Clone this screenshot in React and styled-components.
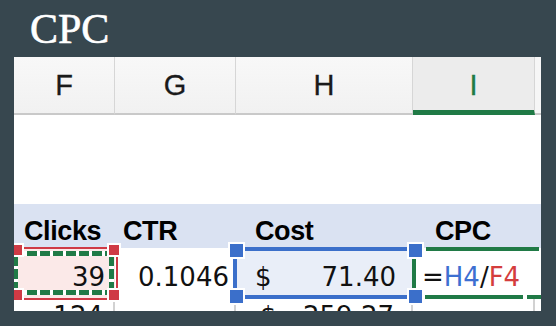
import React from 'react';
import styled, { createGlobalStyle, css } from 'styled-components';

const SLATE = '#37474f';
const GREEN = '#207a46';
const BLUE = '#3b6fca';
const RED = '#cf3a45';

const GlobalStyle = createGlobalStyle`
  html, body {
    margin: 0;
    padding: 0;
    background: ${SLATE};
  }
`;

const Page = styled.div`
  width: 556px;
  height: 326px;
  box-sizing: border-box;
  padding-top: 8px;
  background: ${SLATE};
  overflow: hidden;
`;

const Title = styled.h1`
  margin: 0;
  padding-left: 30px;
  height: 42px;
  font: 400 42px/42px "Liberation Serif", "Times New Roman", serif;
  color: #fff;
  -webkit-text-stroke: 0.6px #fff;
`;

const Sheet = styled.div`
  position: relative;
  margin: 7px 0 0 14px;
  width: 527px;
  height: 254px;
  display: grid;
  grid-template-columns: 101px 121px 177px 122px 6px;
  grid-template-rows: 58px 89px 44px 50px 13px;
  background: #fff;
  overflow: hidden;
  color: #111;
`;

// column letters
const HeaderCell = styled.div`
  box-sizing: border-box;
  display: flex;
  align-items: center;
  justify-content: center;
  background: linear-gradient(#f8f8f8, #f1f1f1);
  border-right: 1px solid #d6d6d6;
  border-bottom: 2px solid #c9c9c9;
  font: 400 29px/30px "Liberation Sans", Arial, sans-serif;
  color: #1a1a1a;
  -webkit-text-stroke: 0.3px currentColor;

  ${p => p.$active && css`
    background: #ececec;
    border-bottom: 5px solid ${GREEN};
    color: ${GREEN};
    padding-top: 3px;
  `}
  ${p => p.$edge && css`
    border-right: none;
    background: #f6f6f6;
  `}
`;

const Blank = styled.div`
  grid-column: 1 / -1;
  background: #fff;
`;

const LabelCell = styled.div`
  box-sizing: border-box;
  padding: 12px 0 0 ${p => p.$pad || 0}px;
  background: #dae2f2;
  font: 700 27px/30px "Liberation Sans", Arial, sans-serif;
  letter-spacing: -0.4px;
  color: #000;
  white-space: nowrap;
`;

const DataCell = styled.div`
  position: relative;
  box-sizing: border-box;
  display: flex;
  justify-content: ${p => p.$justify || 'flex-start'};
  padding: 14px ${p => p.$right || 0}px 0 ${p => p.$left || 0}px;
  background: ${p => p.$bg || '#fff'};
  font: 400 26px/30px "DejaVu Sans", Verdana, sans-serif;
  white-space: nowrap;
`;

const GridCell = styled(DataCell)`
  ::before, ::after {
    content: '';
    position: absolute;
    left: 8px;
    right: 10px;
  }
  ::before {
    top: 2px;
    height: 2px;
    background: #a8c1e6;
  }
  ::after {
    top: 48px;
    height: 2px;
    background: #d3d3d3;
  }
`;

const CutCell = styled.div`
  box-sizing: border-box;
  display: flex;
  justify-content: ${p => p.$justify || 'flex-start'};
  padding: 3px ${p => p.$right || 0}px 0 ${p => p.$left || 0}px;
  border-right: ${p => (p.$edge ? 'none' : '2px solid #d2d2d2')};
  font: 400 26px/30px "DejaVu Sans", Verdana, sans-serif;
  overflow: hidden;
  white-space: nowrap;
`;

// red reference box around F4
const RefBox = styled.div`
  position: absolute;
  top: -1px;
  bottom: -2px;
  left: -2px;
  right: -3px;
  border: 2px solid ${RED};
  z-index: 1;
`;

const dash = dir =>
  `repeating-linear-gradient(${dir}, ${GREEN} 0 10px, #fff 10px 13px)`;

// marching ants of the copy range
const Ants = styled.div`
  position: absolute;
  z-index: 2;
  ${p => p.$side === 'top' && css`top: 3px; left: 0; right: 0; height: 5px; background: ${dash('90deg')};`}
  ${p => p.$side === 'bottom' && css`bottom: 3px; left: 0; right: 0; height: 5px; background: ${dash('90deg')};`}
  ${p => p.$side === 'left' && css`top: 8px; bottom: 8px; left: 0; width: 4px; background: ${dash('180deg')};`}
  ${p => p.$side === 'right' && css`top: 8px; bottom: 8px; right: 1px; width: 5px; background: ${dash('180deg')};`}
`;

const Rule = styled.div`
  position: absolute;
  z-index: 2;
  background: ${p => p.$color};
`;

const HRule = styled(Rule)`
  top: ${p => p.$top}px;
  left: ${p => p.$from}px;
  width: ${p => p.$len}px;
  height: 4px;
`;

const VRule = styled(Rule)`
  left: ${p => p.$at}px;
  top: 10px;
  width: 4px;
  height: 30px;
`;

const Handle = styled.span`
  position: absolute;
  z-index: 4;
  width: ${p => p.$size}px;
  height: ${p => p.$size}px;
  left: ${p => p.$x - p.$size / 2 - 2}px;
  top: ${p => p.$y - p.$size / 2 - 2}px;
  background: ${p => p.$color};
  border: 2px solid #fff;
`;

const Ref = styled.span`
  color: ${p => p.$color || '#111'};
`;

const Handles = ({ color, size, x1, x2, y1, y2 }) => (
  <>
    <Handle $color={color} $size={size} $x={x1} $y={y1} />
    <Handle $color={color} $size={size} $x={x2} $y={y1} />
    <Handle $color={color} $size={size} $x={x1} $y={y2} />
    <Handle $color={color} $size={size} $x={x2} $y={y2} />
  </>
);

const App = () => (
  <Page>
    <GlobalStyle />
    <Title>CPC</Title>
    <Sheet>
      <HeaderCell>F</HeaderCell>
      <HeaderCell>G</HeaderCell>
      <HeaderCell>H</HeaderCell>
      <HeaderCell $active>I</HeaderCell>
      <HeaderCell $edge />

      <Blank />

      <LabelCell $pad={10}>Clicks</LabelCell>
      <LabelCell $pad={8}>CTR</LabelCell>
      <LabelCell $pad={19}>Cost</LabelCell>
      <LabelCell $pad={22}>CPC</LabelCell>
      <LabelCell />

      <DataCell $justify="flex-end" $right={10} $bg="#fbe9e8">
        <RefBox />
        <Ants $side="top" />
        <Ants $side="bottom" />
        <Ants $side="left" />
        <Ants $side="right" />
        <Handles color={RED} size={10} x1={3} x2={100} y1={2} y2={47} />
        39
      </DataCell>
      <GridCell $justify="flex-end" $right={7}>0.1046</GridCell>
      <DataCell $justify="space-between" $left={19} $right={17} $bg="#e9eef8">
        <HRule $color={BLUE} $top={-1} $from={0} $len={177} />
        <HRule $color={BLUE} $top={47} $from={0} $len={177} />
        <VRule $color={BLUE} $at={-3} />
        <Handles color={BLUE} size={13} x1={0.5} x2={179} y1={2.5} y2={48} />
        <span>$</span>
        <span>71.40</span>
      </DataCell>
      <DataCell $left={9}>
        <HRule $color={GREEN} $top={-1} $from={13} $len={113} />
        <HRule $color={GREEN} $top={47} $from={12} $len={98} />
        <HRule $color={GREEN} $top={47} $from={114} $len={14} />
        <VRule $color={GREEN} $at={-1} />
        <span>=<Ref $color="#3d6fd1">H4</Ref>/<Ref $color="#d43d3d">F4</Ref></span>
      </DataCell>
      <DataCell />

      <CutCell $justify="flex-end" $right={10}>124</CutCell>
      <CutCell />
      <CutCell $justify="space-between" $left={24} $right={17}>
        <span>$</span>
        <span>259.27</span>
      </CutCell>
      <CutCell />
      <CutCell $edge />
    </Sheet>
  </Page>
);

export default App;
